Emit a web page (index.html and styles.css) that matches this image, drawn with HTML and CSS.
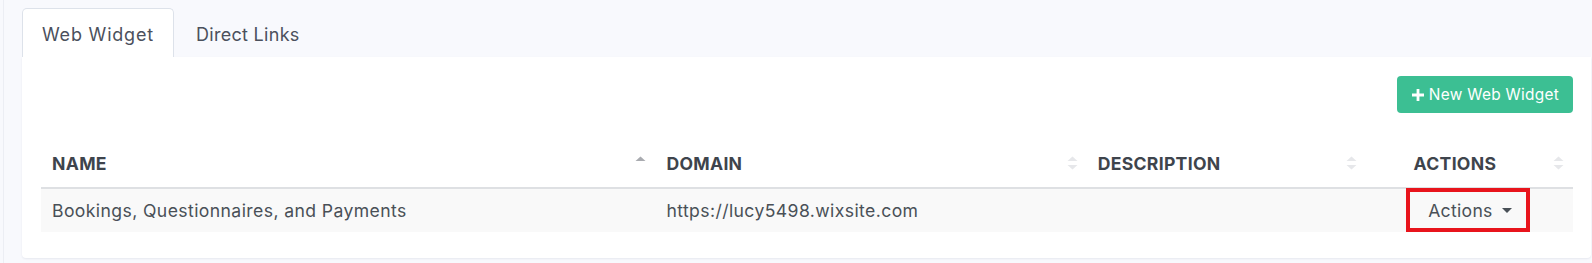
FILE: index.html
```html
<!DOCTYPE html>
<html lang="en">
<head>
<meta charset="utf-8">
<title>Web Widget</title>
<link rel="stylesheet" href="styles.css">
</head>
<body>
<div class="page">
  <ul class="tabs">
    <li class="tab active">Web Widget</li>
    <li class="tab">Direct Links</li>
  </ul>
  <div class="card">
    <div class="toolbar">
      <button class="btn-new" type="button">
        <svg class="plus" viewBox="0 0 12 12" width="12" height="12" aria-hidden="true"><path d="M4.6 0h2.8v4.6H12v2.8H7.4V12H4.6V7.4H0V4.6h4.6z" fill="#fff"/></svg>
        <span>New Web Widget</span>
      </button>
    </div>
    <table class="grid">
      <colgroup>
        <col class="c-name"><col class="c-domain"><col class="c-desc"><col class="c-actions">
      </colgroup>
      <thead>
        <tr>
          <th><div class="th-in"><span class="lbl">NAME</span>
            <svg class="sort" viewBox="0 0 11 14" width="11" height="14" aria-hidden="true"><path d="M5.5 0.5L10.5 5H0.5z" fill="#a9abb0"/></svg></div></th>
          <th><div class="th-in"><span class="lbl">DOMAIN</span>
            <svg class="sort" viewBox="0 0 11 14" width="11" height="14" aria-hidden="true"><path d="M5.5 0.5L10.5 5H0.5z" fill="#e6e7ea"/><path d="M5.5 13.5L10.5 9H0.5z" fill="#e6e7ea"/></svg></div></th>
          <th><div class="th-in"><span class="lbl">DESCRIPTION</span>
            <svg class="sort" viewBox="0 0 11 14" width="11" height="14" aria-hidden="true"><path d="M5.5 0.5L10.5 5H0.5z" fill="#e6e7ea"/><path d="M5.5 13.5L10.5 9H0.5z" fill="#e6e7ea"/></svg></div></th>
          <th><div class="th-in center"><span class="lbl">ACTIONS</span>
            <svg class="sort" viewBox="0 0 11 14" width="11" height="14" aria-hidden="true"><path d="M5.5 0.5L10.5 5H0.5z" fill="#e6e7ea"/><path d="M5.5 13.5L10.5 9H0.5z" fill="#e6e7ea"/></svg></div></th>
        </tr>
      </thead>
      <tbody>
        <tr>
          <td>Bookings, Questionnaires, and Payments</td>
          <td>https://lucy5498.wixsite.com</td>
          <td></td>
          <td class="center">
            <button class="btn-actions" type="button">Actions
              <svg class="caret" viewBox="0 0 10 5" width="10" height="5" aria-hidden="true"><path d="M0 0h10L5 5z" fill="#495057"/></svg>
            </button>
          </td>
        </tr>
      </tbody>
    </table>
  </div>
</div>
</body>
</html>
```

FILE: styles.css
```css
* { box-sizing: border-box; }

html, body {
  margin: 0;
  padding: 0;
  background: #f8f9fd;
}

body {
  font-family: Inter, "Noto Sans", "Liberation Sans", sans-serif;
  font-size: 17.6px;
  letter-spacing: 0.4px;
  color: #495057;
}

.page {
  margin-left: 3px;
  border-left: 1px solid #eceef4;
  padding: 8px 1px 4px 18px;
  min-height: 263px;
}

.tabs {
  list-style: none;
  margin: 0;
  padding: 0;
  display: flex;
  height: 49px;
}

.tab {
  height: 49px;
  padding: 2px 19px 0;
  border: 1px solid transparent;
  border-bottom: none;
  border-radius: 5px 5px 0 0;
  display: flex;
  align-items: center;
  color: #4b505c;
  font-size: 18px;
  letter-spacing: 0.8px;
}

.tab + .tab {
  margin-left: 2px;
  letter-spacing: 0.3px;
}

.tab.active {
  background: #fff;
  border-color: #dde2ea;
}

.card {
  background: #fff;
  padding: 19px 18px 26px 19px;
  border-radius: 0 0 4px 4px;
  box-shadow: 0 1px 2px rgba(30, 40, 80, 0.08);
}

.toolbar {
  display: flex;
  justify-content: flex-end;
  margin-bottom: 29px;
}

.btn-new {
  height: 37px;
  width: 176px;
  display: flex;
  align-items: center;
  justify-content: center;
  gap: 5px;
  border: none;
  border-radius: 4px;
  background: #3cbf93;
  color: #fff;
  font-family: inherit;
  font-size: 15.4px;
  letter-spacing: 0.3px;
  padding: 0 0 0 1px;
}

.plus { flex: none; }

.grid {
  width: 100%;
  border-collapse: collapse;
  table-layout: fixed;
}

.c-name { width: 614px; }
.c-domain { width: 431px; }
.c-desc { width: 279px; }
.c-actions { width: 207px; }

.grid th {
  height: 46px;
  padding: 0 9px 2px 11px;
  text-align: left;
  font-weight: 700;
  color: #3e444c;
  letter-spacing: 0.3px;
  border-bottom: 2px solid #dee0e3;
  vertical-align: middle;
}

.th-in {
  display: flex;
  align-items: center;
}

.th-in .lbl { flex: 1; }

.th-in.center .lbl {
  text-align: center;
  padding-right: 20px;
}

.sort {
  flex: none;
  margin-top: -1px;
}

.grid td {
  height: 44px;
  padding: 0 11px;
  background: #f9f9f9;
  vertical-align: middle;
  white-space: nowrap;
}

.grid td.center { text-align: center; }

.btn-actions {
  display: inline-flex;
  align-items: center;
  justify-content: center;
  gap: 9px;
  width: 124px;
  height: 44px;
  margin: -1px 3px 0 0;
  border: 4px solid #e8141c;
  background: transparent;
  color: #495057;
  font-family: inherit;
  font-size: 17.6px;
  letter-spacing: 0.3px;
  padding: 0 0 0 4px;
}

.caret { flex: none; }
```
